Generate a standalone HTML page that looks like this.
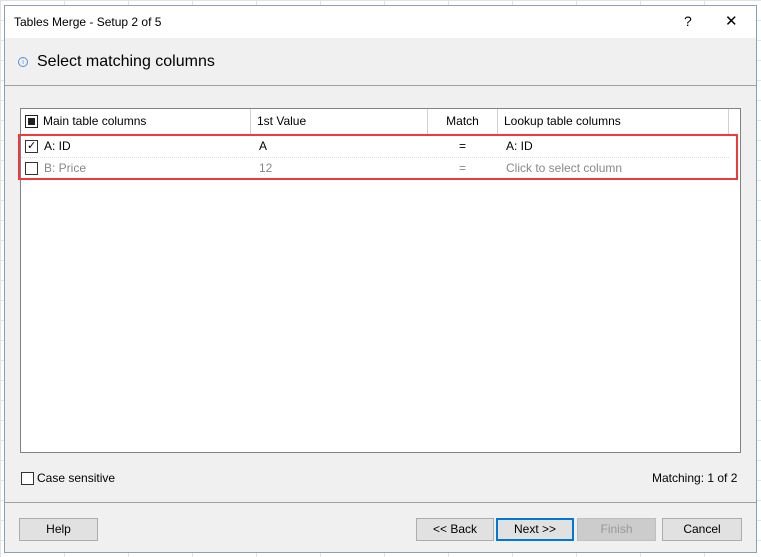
<!DOCTYPE html>
<html><head><style>
*{margin:0;padding:0;box-sizing:border-box}
body{width:761px;height:557px;overflow:hidden;background:#fff;font-family:"Liberation Sans",sans-serif;font-size:12px;color:#000;position:relative}
.grid{position:absolute;inset:0;background-image:linear-gradient(#e2e2e2 1px,transparent 1px),linear-gradient(90deg,#e2e2e2 1px,transparent 1px);background-size:64px 20px}
.dlg{position:absolute;left:4px;top:5px;width:753px;height:548px;background:#f0f0f0;border:1px solid #8a9fb8}
.title{position:absolute;left:0;top:0;right:0;height:32px;background:#fff;font-size:12px}
.a{position:absolute;white-space:nowrap}
.tbl{position:absolute;left:15px;top:102px;width:721px;height:345px;background:#fff;border:1px solid #828282}
.hd{position:absolute;top:0;height:26px;background:#fff;border-right:1px solid #d0d0d0;border-bottom:1px solid #d0d0d0;line-height:25px;padding-left:6px}
.btn{position:absolute;top:512px;height:23px;background:#e1e1e1;border:1px solid #adadad;text-align:center;line-height:21px}
.cb{position:absolute;width:13px;height:13px;border:1px solid #333;background:#fff}
</style></head><body>
<div class="grid"></div>
<div class="dlg">
 <div class="title">
  <div class="a" style="left:9px;top:9px">Tables Merge - Setup 2 of 5</div>
  <div class="a" style="left:679px;top:7px;font-size:14px">?</div>
  <div class="a" style="left:720px;top:6px;font-size:15px">✕</div>
 </div>
 <div class="a" style="left:13px;top:51px;width:10px;height:10px;border:1px solid #5a8fd0;border-radius:50%;font-size:7px;color:#5a8fd0;text-align:center;line-height:9px">i</div>
 <div class="a" style="left:32px;top:47px;font-size:16px">Select matching columns</div>
 <div class="a" style="left:0;top:79px;width:751px;height:1px;background:#a0a0a0"></div>
 <div class="tbl">
  <div class="hd" style="left:0;width:230px;padding-left:22px">Main table columns</div>
  <div class="cb" style="left:4px;top:6px;border-color:#222"><div style="margin:2px;width:7px;height:7px;background:#222"></div></div>
  <div class="hd" style="left:230px;width:177px">1st Value</div>
  <div class="hd" style="left:407px;width:70px;text-align:center;padding:0">Match</div>
  <div class="hd" style="left:477px;width:231px">Lookup table columns</div>
  <div class="a" style="left:0;top:48px;width:708px;border-top:1px dotted #ddd"></div>
  <div class="cb" style="left:4px;top:31px"></div>
  <div class="a" style="left:6px;top:30px;font-size:11px">✓</div>
  <div class="a" style="left:23px;top:30px">A: ID</div>
  <div class="a" style="left:238px;top:30px">A</div>
  <div class="a" style="left:438px;top:30px">=</div>
  <div class="a" style="left:485px;top:30px">A: ID</div>
  <div class="cb" style="left:4px;top:53px"></div>
  <div class="a" style="left:23px;top:52px;color:#888">B: Price</div>
  <div class="a" style="left:238px;top:52px;color:#888">12</div>
  <div class="a" style="left:438px;top:52px;color:#888">=</div>
  <div class="a" style="left:485px;top:52px;color:#888">Click to select column</div>
 </div>
 <div class="a" style="left:13px;top:128px;width:720px;height:46px;border:2px solid #f03a3a"></div>
 <div class="cb" style="left:16px;top:466px"></div>
 <div class="a" style="left:32px;top:465px">Case sensitive</div>
 <div class="a" style="left:647px;top:465px">Matching: 1 of 2</div>
 <div class="a" style="left:0;top:496px;width:751px;height:1px;background:#a0a0a0"></div>
 <div class="btn" style="left:14px;width:79px">Help</div>
 <div class="btn" style="left:411px;width:78px">&lt;&lt; Back</div>
 <div class="btn" style="left:491px;width:78px;border:2px solid #0078d7;line-height:19px">Next &gt;&gt;</div>
 <div class="btn" style="left:572px;width:79px;background:#ccc;border-color:#bfbfbf;color:#999">Finish</div>
 <div class="btn" style="left:657px;width:80px">Cancel</div>
</div>
</body></html>
